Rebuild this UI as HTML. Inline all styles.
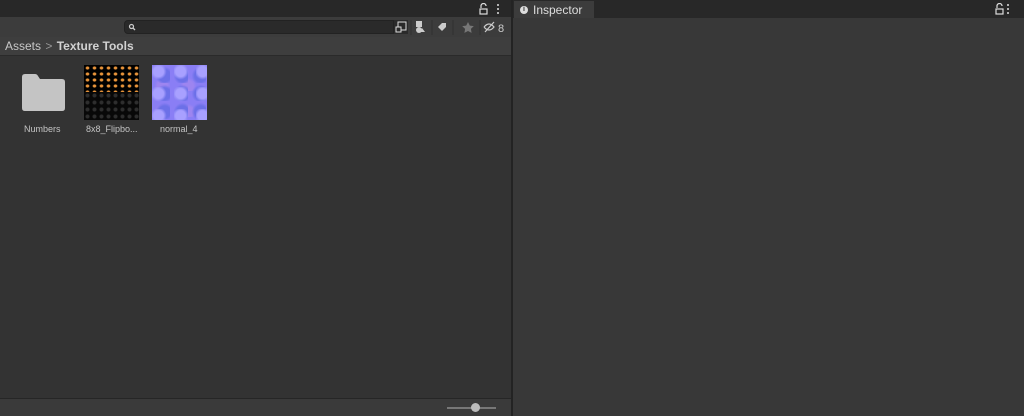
<!DOCTYPE html>
<html><head><style>
*{margin:0;padding:0;box-sizing:border-box}
body{width:1024px;height:416px;background:#232323;font-family:"Liberation Sans",sans-serif;position:relative;overflow:hidden;color:#c4c4c4}
.abs{position:absolute}
</style></head><body>
<div class="abs" style="left:0;top:0;width:511px;height:17px;background:#282828"></div>
<svg class="abs" style="left:478px;top:3px" width="30" height="12"><path d="M3 5 V3 a2.5 2.5 0 0 1 5 0" stroke="#ddd" fill="none" stroke-width="1.2"/><rect x="2" y="6" width="7" height="5" fill="none" stroke="#ddd" stroke-width="1.2"/><circle cx="20" cy="2" r="1" fill="#ddd"/><circle cx="20" cy="6" r="1" fill="#ddd"/><circle cx="20" cy="10" r="1" fill="#ddd"/></svg>
<div class="abs" style="left:0;top:17px;width:511px;height:20px;background:#3c3c3c"></div>
<div class="abs" style="left:124px;top:20px;width:270px;height:14px;background:#2a2a2a;border:1px solid #222;border-radius:4px 0 0 4px"></div>
<svg class="abs" style="left:128px;top:23px" width="8" height="8"><circle cx="3.5" cy="3.5" r="2" stroke="#ccc" fill="none" stroke-width="1.2"/><path d="M5 5 L7 7" stroke="#ccc" stroke-width="1.3"/></svg>
<svg class="abs" style="left:394px;top:20px" width="114" height="15">
<rect x="0" y="0" width="14" height="14" fill="#2a2a2a"/>
<rect x="4" y="2" width="8" height="8" fill="none" stroke="#ddd"/><rect x="2" y="7" width="5" height="5" fill="#2a2a2a" stroke="#ddd"/>
<line x1="17" y1="0" x2="17" y2="15" stroke="#2f2f2f"/>
<rect x="22" y="1" width="6" height="6" fill="#ccc"/><circle cx="25" cy="10" r="3" fill="#ccc"/><path d="M28 8 l3 4 h-5z" fill="#ccc"/>
<line x1="38" y1="0" x2="38" y2="15" stroke="#2f2f2f"/>
<path d="M44 7 l4 -4 h4 v4 l-4 4 z" fill="#ccc"/>
<line x1="59" y1="0" x2="59" y2="15" stroke="#2f2f2f"/>
<path d="M74 2 l1.8 3.6 4 .5 -2.9 2.8 .7 4 -3.6 -1.9 -3.6 1.9 .7 -4 -2.9 -2.8 4 -.5z" fill="#777"/>
<line x1="86" y1="0" x2="86" y2="15" stroke="#2f2f2f"/>
<path d="M90 7 q5 -6 10 0 q-5 6 -10 0" fill="none" stroke="#ccc" stroke-width="1.2"/><line x1="91" y1="12" x2="100" y2="2" stroke="#ccc" stroke-width="1.2"/>
<text x="104" y="12" font-size="11" fill="#ccc" font-family="Liberation Sans">8</text>
</svg>
<div class="abs" style="left:0;top:37px;width:511px;height:19px;background:#3e3e3e;border-bottom:1px solid #2a2a2a;font-size:12px;line-height:18px;padding-left:5px;color:#c8c8c8">Assets <span style="color:#999;margin:0 1px">&gt;</span> <b style="color:#d2d2d2">Texture Tools</b></div>
<div class="abs" style="left:0;top:56px;width:511px;height:342px;background:#333"></div>
<svg class="abs" style="left:19px;top:72px" width="50" height="42"><path d="M3 5 q0 -3 3 -3 h10 q2 0 3 2 l2 3 h22 q3 0 3 3 v26 q0 3 -3 3 h-37 q-3 0 -3 -3z" fill="#c4c4c4"/></svg>
<div class="abs" style="left:84px;top:65px;width:55px;height:55px;background:#000;background-image:radial-gradient(ellipse at 50% 50%,#e9943a 0 1.3px,transparent 2.3px);background-size:7px 6px"></div>
<div class="abs" style="left:84px;top:92px;width:55px;height:28px;background:#080808;background-image:radial-gradient(circle,#2e2e2e 0 1.5px,transparent 2.5px);background-size:7px 7px"></div>
<div class="abs" style="left:152px;top:65px;width:55px;height:55px;background:#8a7ef5;background-image:radial-gradient(circle at 30% 30%,#a8a0ff 0 5px,transparent 8px),radial-gradient(circle at 70% 60%,#6c70e8 0 6px,transparent 9px),radial-gradient(circle at 40% 80%,#9d85f0 0 5px,transparent 8px);background-size:22px 22px,18px 18px,26px 26px"></div>
<div class="abs" style="left:24px;top:124px;font-size:9px;color:#c4c4c4">Numbers</div>
<div class="abs" style="left:86px;top:124px;font-size:9px;color:#c4c4c4">8x8_Flipbo...</div>
<div class="abs" style="left:160px;top:124px;font-size:9px;color:#c4c4c4">normal_4</div>
<div class="abs" style="left:0;top:398px;width:511px;height:18px;background:#3a3a3a;border-top:1px solid #262626"></div>
<div class="abs" style="left:447px;top:407px;width:49px;height:2px;background:#777"></div>
<div class="abs" style="left:471px;top:403px;width:9px;height:9px;border-radius:50%;background:#bbb"></div>
<div class="abs" style="left:513px;top:0;width:511px;height:18px;background:#282828"></div>
<div class="abs" style="left:513px;top:18px;width:511px;height:398px;background:#383838"></div>
<div class="abs" style="left:514px;top:1px;width:80px;height:17px;background:#3c3c3c;font-size:12px;line-height:19px;padding-left:19px;color:#ddd">Inspector</div>
<div class="abs" style="left:520px;top:6px;width:8px;height:8px;border-radius:50%;background:#ddd;font-size:7px;line-height:8px;text-align:center;color:#333;font-weight:bold">i</div>
<svg class="abs" style="left:994px;top:3px" width="30" height="12"><path d="M3 5 V3 a2.5 2.5 0 0 1 5 0" stroke="#ddd" fill="none" stroke-width="1.2"/><rect x="2" y="6" width="7" height="5" fill="none" stroke="#ddd" stroke-width="1.2"/><circle cx="14" cy="2" r="1" fill="#ddd"/><circle cx="14" cy="6" r="1" fill="#ddd"/><circle cx="14" cy="10" r="1" fill="#ddd"/></svg>
</body></html>
